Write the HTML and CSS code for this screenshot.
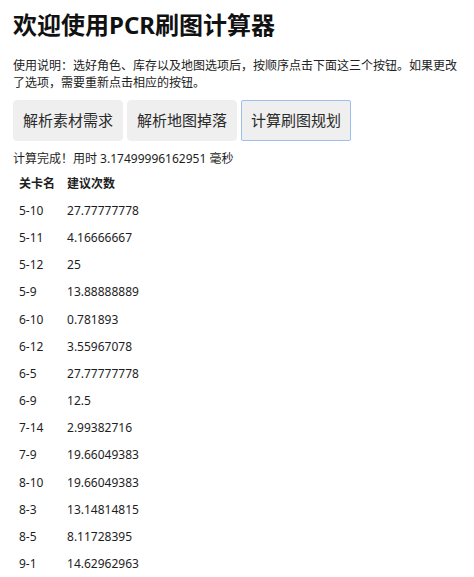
FILE: index.html
```html
<!DOCTYPE html>
<html lang="zh-CN">
<head>
<meta charset="utf-8">
<title>PCR刷图计算器</title>
<link rel="stylesheet" href="styles.css">
</head>
<body>
<h1 class="title">欢迎使用PCR刷图计算器</h1>
<p class="desc">使用说明：选好角色、库存以及地图选项后，按顺序点击下面这三个按钮。如果更改了选项，需要重新点击相应的按钮。</p>
<div class="actions">
  <button class="btn">解析素材需求</button>
  <button class="btn">解析地图掉落</button>
  <button class="btn btn-focus">计算刷图规划</button>
</div>
<div class="status">计算完成！用时 3.17499996162951 毫秒</div>
<table class="plan">
  <thead>
    <tr><th>关卡名</th><th>建议次数</th></tr>
  </thead>
  <tbody>
    <tr><td>5-10</td><td>27.77777778</td></tr>
    <tr><td>5-11</td><td>4.16666667</td></tr>
    <tr><td>5-12</td><td>25</td></tr>
    <tr><td>5-9</td><td>13.88888889</td></tr>
    <tr><td>6-10</td><td>0.781893</td></tr>
    <tr><td>6-12</td><td>3.55967078</td></tr>
    <tr><td>6-5</td><td>27.77777778</td></tr>
    <tr><td>6-9</td><td>12.5</td></tr>
    <tr><td>7-14</td><td>2.99382716</td></tr>
    <tr><td>7-9</td><td>19.66049383</td></tr>
    <tr><td>8-10</td><td>19.66049383</td></tr>
    <tr><td>8-3</td><td>13.14814815</td></tr>
    <tr><td>8-5</td><td>8.11728395</td></tr>
    <tr><td>9-1</td><td>14.62962963</td></tr>
  </tbody>
</table>
</body>
</html>
```
FILE: styles.css
```css
html, body {
  margin: 0;
  background: #ffffff;
}
body {
  padding: 0 13px;
  font-family: "Noto Sans", "Noto Sans CJK SC", sans-serif;
  color: #1e1e1e;
  font-size: 12px;
}
.title {
  margin: 10px 0 0;
  font-size: 24px;
  line-height: 30px;
  font-weight: 700;
  color: #111;
}
.desc {
  margin: 18px 0 0;
  font-size: 12px;
  line-height: 16.5px;
  color: #222;
}
.actions {
  display: flex;
  gap: 4px;
  margin-top: 9px;
}
.btn {
  font-family: "Noto Sans", "Noto Sans CJK SC", sans-serif;
  font-size: 15px;
  line-height: 21px;
  padding: 9px 9px;
  border: 1px solid #efefef;
  border-radius: 4px;
  background: #efefef;
  color: #2a2a2a;
}
.btn-focus {
  border-color: #9cc0ee;
  border-radius: 2px;
}
.status {
  margin-top: 8.5px;
  line-height: 17px;
}
.plan {
  margin-top: 3px;
  border-collapse: collapse;
}
.plan th,
.plan td {
  height: 27.2px;
  padding: 0 6px;
  text-align: left;
  vertical-align: middle;
  line-height: 17px;
  font-size: 12px;
}
.plan th {
  font-weight: 700;
}
```
